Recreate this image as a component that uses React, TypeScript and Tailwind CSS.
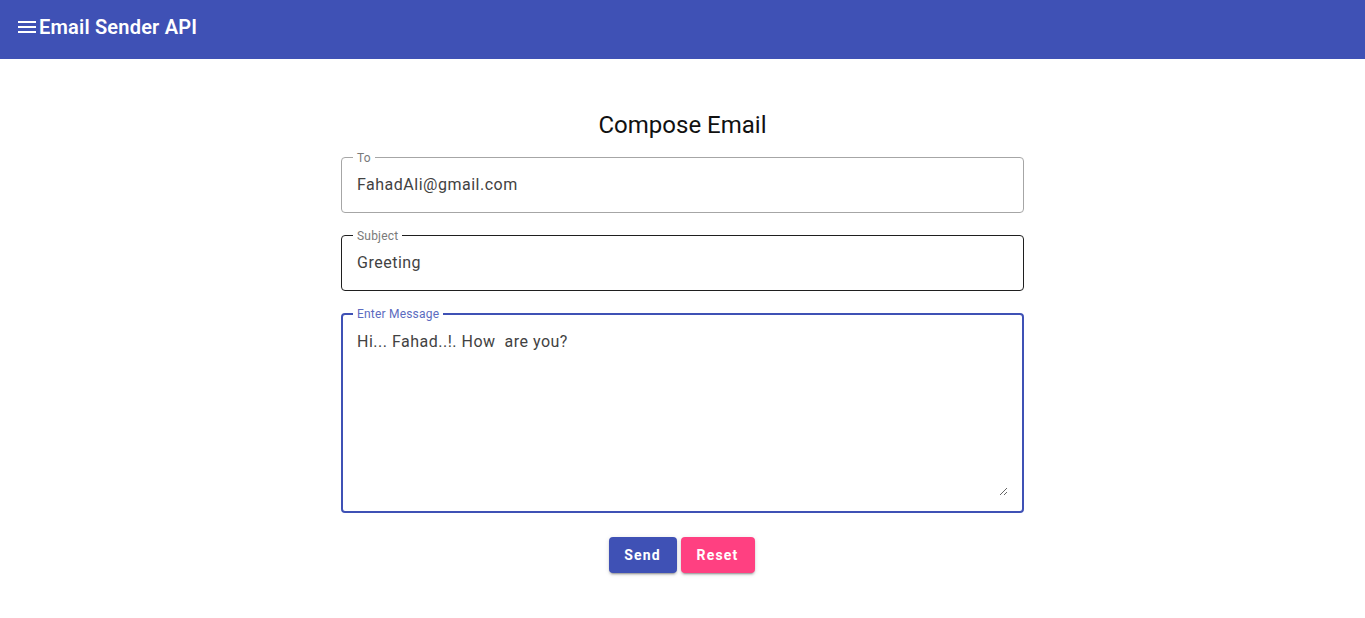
import React from "react";

function Field({
  label,
  value,
  variant,
}: {
  label: string;
  value: string;
  variant: "idle" | "hover";
}) {
  const border =
    variant === "hover" ? "border border-[#1f1f1f]" : "border border-[#a6a6a6]";
  return (
    <div className={`relative h-[56px] rounded-[4px] ${border} flex items-center px-[15px]`}>
      <span className="absolute left-[11px] top-[-7px] bg-white px-[4px] text-[12px] leading-[14px] text-[#7a7a7a] tracking-[0.2px]">
        {label}
      </span>
      <input
        readOnly
        value={value}
        className="w-full bg-transparent outline-none text-[16px] text-[#424242] tracking-[0.5px]"
        style={{ fontFamily: "Roboto, sans-serif" }}
      />
    </div>
  );
}

export default function App() {
  return (
    <div className="min-h-[618px] bg-white" style={{ fontFamily: "Roboto, 'Liberation Sans', sans-serif" }}>
      <header className="h-[59px] bg-[#3f51b5]">
        <div className="h-[53px] flex items-center pl-[15px]">
          <svg width="24" height="24" viewBox="0 0 24 24" fill="white">
            <path d="M3 18h18v-2H3v2zm0-5h18v-2H3v2zm0-7v2h18V6H3z" />
          </svg>
          <span className="text-[20px] font-semibold text-white leading-[32px] tracking-[0.2px]">
            Email Sender API
          </span>
        </div>
      </header>

      <main className="w-[683px] mx-auto pt-[50px]">
        <h1 className="text-center text-[24px] leading-[32px] text-[#111]">Compose Email</h1>
        <div className="mt-[16px] flex flex-col gap-[22px]">
          <Field label="To" value="FahadAli@gmail.com" variant="idle" />
          <Field label="Subject" value="Greeting" variant="hover" />
          <div className="relative h-[200px] rounded-[4px] border-2 border-[#3f51b5] pl-[14px] pr-[14px] pt-[15px] pb-[15px] flex">
            <span className="absolute left-[10px] top-[-8px] bg-white px-[4px] text-[12px] leading-[14px] text-[#5c6bc0] tracking-[0.2px]">
              Enter Message
            </span>
            <textarea
              readOnly
              defaultValue={"Hi... Fahad..!. How  are you?"}
              className="w-full h-full bg-transparent outline-none text-[16px] leading-[23px] text-[#424242] tracking-[0.5px] resize"
              style={{ fontFamily: "Roboto, sans-serif" }}
            />
          </div>
        </div>
        <div className="mt-[24px] flex justify-center gap-[4px] pr-[2px]">
          <button className="h-[36px] w-[68px] rounded-[4px] bg-[#3f51b5] text-white text-[14px] font-bold tracking-[1.2px] shadow-[0_3px_1px_-2px_rgba(0,0,0,0.2),0_2px_2px_0_rgba(0,0,0,0.14),0_1px_5px_0_rgba(0,0,0,0.12)]">
            Send
          </button>
          <button className="h-[36px] w-[74px] rounded-[4px] bg-[#ff4081] text-white text-[14px] font-bold tracking-[1.2px] shadow-[0_3px_1px_-2px_rgba(0,0,0,0.2),0_2px_2px_0_rgba(0,0,0,0.14),0_1px_5px_0_rgba(0,0,0,0.12)]">
            Reset
          </button>
        </div>
      </main>
    </div>
  );
}
